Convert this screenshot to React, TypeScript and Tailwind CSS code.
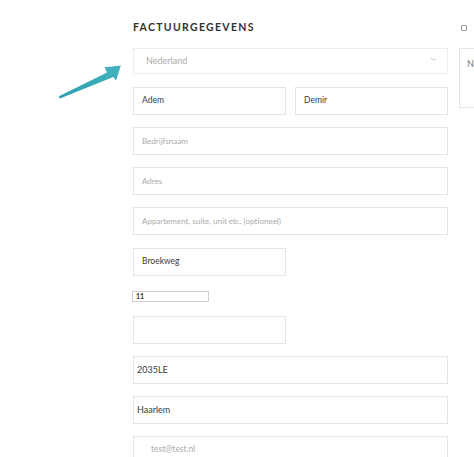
import React from "react";

const font = { fontFamily: '"Lato", "Liberation Sans", sans-serif' };

function Field({
  value,
  placeholder,
  wide = true,
  className = "",
}: {
  value?: string;
  placeholder?: string;
  wide?: boolean;
  className?: string;
}) {
  return (
    <div
      className={`flex h-[28px] items-center border border-[#e4e4e4] bg-white ${
        wide ? "w-[315px]" : "w-[153px]"
      } ${className}`}
    >
      {value ? (
        <span className="text-[8.5px] text-[#3a3a3a]">{value}</span>
      ) : (
        <span className="text-[8px] text-[#ababab]">{placeholder}</span>
      )}
    </div>
  );
}

function Arrow() {
  return (
    <svg
      className="absolute left-[55px] top-[60px]"
      width="70"
      height="42"
      viewBox="0 0 70 42"
    >
      <defs>
        <linearGradient id="ar" x1="0" y1="1" x2="1" y2="0">
          <stop offset="0" stopColor="#2b9fb0" />
          <stop offset="1" stopColor="#44b4bf" />
        </linearGradient>
      </defs>
      <path
        d="M3.5 36.5 L52 12.5 L49.5 7.2 L65.8 5.6 L61.2 20.5 L58.3 17 L5 38.5 Z"
        fill="url(#ar)"
      />
    </svg>
  );
}

export default function App() {
  return (
    <div
      className="relative h-[457px] w-[474px] overflow-hidden bg-white"
      style={font}
    >
      <Arrow />
      <div className="flex">
        <div className="w-[133px] shrink-0" />
        <div className="w-[315px] shrink-0">
          <h2 className="pt-[22px] text-[10.5px] leading-none font-bold tracking-[1.3px] text-[#333]">
            FACTUURGEGEVENS
          </h2>
          <div className="mt-[15px] flex h-[26px] items-center justify-between border border-[#ececec] pr-[10px] pl-[12px]">
            <span className="text-[9px] text-[#ababab]">Nederland</span>
            <svg width="7" height="5" viewBox="0 0 7 5" className="mt-[-2px]">
              <path d="M1 1 L3.5 3.5 L6 1" fill="none" stroke="#b5b5b5" strokeWidth="0.8" />
            </svg>
          </div>
          <div className="mt-[13px] flex justify-between">
            <Field value="Adem" wide={false} className="pl-[8px]" />
            <Field value="Demir" wide={false} className="w-[152px] pl-[8px]" />
          </div>
          <Field placeholder="Bedrijfsnaam" className="mt-[12px] pl-[8px]" />
          <Field placeholder="Adres" className="mt-[12px] pl-[8px]" />
          <Field
            placeholder="Appartement, suite, unit etc. (optioneel)"
            className="mt-[12px] pl-[8px]"
          />
          <Field value="Broekweg" wide={false} className="mt-[13px] pl-[8px]" />
          <div className="mt-[15px] -ml-[1px] flex h-[11px] w-[77px] items-center border border-[#cfcfcf] pl-[3px]">
            <span className="text-[7px] font-bold text-[#333]">11</span>
          </div>
          <Field wide={false} className="mt-[14px]" />
          <Field value="2035LE" className="mt-[12px] pl-[3px] [&>span]:text-[9px]" />
          <Field value="Haarlem" className="mt-[12px] pl-[3px] [&>span]:text-[9px]" />
          <Field placeholder="test@test.nl" className="mt-[12px] pl-[17px] [&>span]:text-[8.5px]" />
        </div>
        <div className="ml-[11px] shrink-0">
          <div className="mt-[25px] ml-[2px] h-[6px] w-[6px] rounded-[1px] border border-[#999]" />
          <div className="mt-[17px] flex h-[60px] w-[40px] border border-[#e4e4e4] pt-[8px] pl-[7px]">
            <span className="text-[9px] text-[#777]">Na</span>
          </div>
        </div>
      </div>
    </div>
  );
}
